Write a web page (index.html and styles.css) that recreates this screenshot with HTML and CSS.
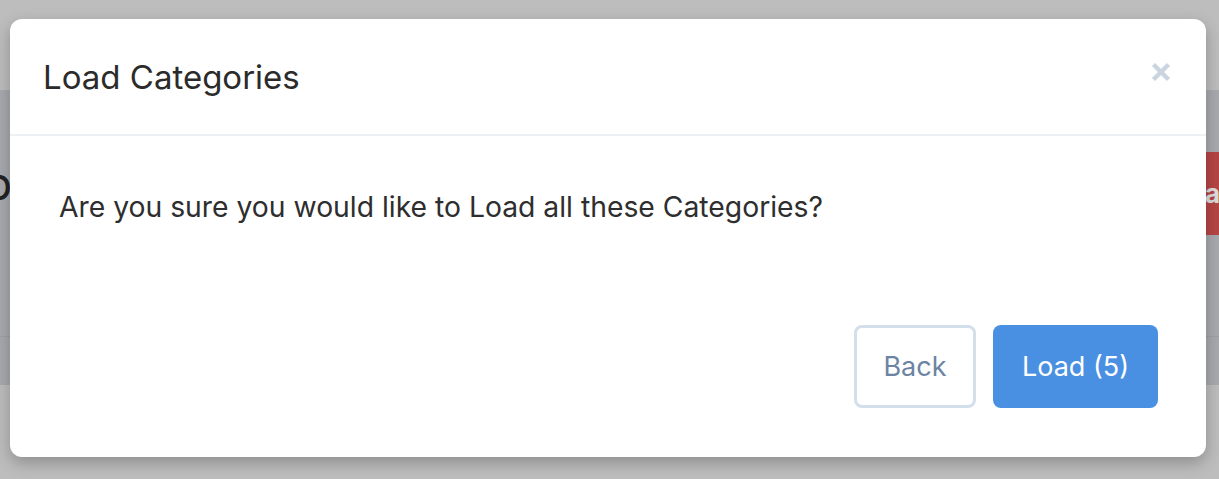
FILE: index.html
```html
<!DOCTYPE html>
<html>
<head>
<meta charset="utf-8">
<link rel="stylesheet" href="styles.css">
</head>
<body>
<div class="page">
  <div class="page-top"></div>
  <div class="page-main">
    <div class="page-heading">
      <span class="page-title">p</span>
      <span class="page-btn">a</span>
    </div>
    <div class="page-rule"></div>
  </div>
  <div class="page-bottom"></div>
</div>

<div class="modal">
  <div class="modal-header">
    <h2 class="modal-title">Load Categories</h2>
    <button class="modal-close" aria-label="Close">
      <svg width="20" height="20" viewBox="0 0 20 20"><path d="M2.5 2.5 L17.5 17.5 M17.5 2.5 L2.5 17.5" stroke="#cbd5df" stroke-width="4.5" stroke-linecap="butt"/></svg>
    </button>
  </div>
  <div class="modal-body">
    <p>Are you sure you would like to Load all these Categories?</p>
  </div>
  <div class="modal-footer">
    <button class="btn btn-back">Back</button>
    <button class="btn btn-load">Load (5)</button>
  </div>
</div>
</body>
</html>
```

FILE: styles.css
```css
* { box-sizing: border-box; }
html, body {
  margin: 0;
  padding: 0;
  width: 1219px;
  height: 479px;
  overflow: hidden;
  font-family: Inter, "Liberation Sans", sans-serif;
}
.page {
  display: flex;
  flex-direction: column;
  height: 479px;
  background: #bdbdbd;
}
.page-top {
  height: 90px;
  background: #bdbdbd;
}
.page-main {
  height: 295px;
  background: #a7a9ae;
  display: flex;
  flex-direction: column;
}
.page-heading {
  margin-top: 62px;
  height: 83px;
  display: flex;
  justify-content: space-between;
  align-items: center;
}
.page-title {
  font-size: 46px;
  line-height: 50px;
  color: #222;
  margin-left: -16px;
  margin-top: -22px;
}
.page-btn {
  width: 60px;
  height: 83px;
  background: #b54545;
  color: #ddd;
  font-weight: bold;
  font-size: 26px;
  display: flex;
  align-items: center;
  padding-left: 6px;
  margin-right: -40px;
}
.page-rule {
  margin-top: 101px;
  height: 1px;
  background: #9ea0a5;
}
.page-bottom { flex: 1; }

.modal {
  position: absolute;
  left: 10px;
  top: 19px;
  width: 1196px;
  height: 438px;
  background: #fff;
  border-radius: 12px;
  box-shadow: 0 6px 16px rgba(0,0,0,0.25);
  display: flex;
  flex-direction: column;
}
.modal-header {
  height: 117px;
  border-bottom: 2px solid #edf1f6;
  display: flex;
  align-items: flex-start;
  justify-content: space-between;
  padding: 38px 35px 0 33px;
}
.modal-title {
  margin: 0;
  font-size: 33px;
  line-height: 40px;
  font-weight: 400;
  color: #2b2b2b;
}
.modal-close {
  border: 0;
  background: none;
  padding: 0;
  margin-top: 5px;
  display: flex;
}
.modal-body {
  padding: 54px 49px 0;
}
.modal-body p {
  margin: 0;
  font-size: 28.3px;
  line-height: 34px;
  color: #2e2e2e;
}
.modal-footer {
  margin-top: auto;
  display: flex;
  justify-content: flex-end;
  gap: 17px;
  padding: 0 48px 49px;
}
.btn {
  height: 83px;
  border-radius: 8px;
  font-family: inherit;
  font-size: 27px;
  padding: 0 25px;
}
.btn-back {
  width: 122px;
  background: #fff;
  border: 3px solid #d3dfeb;
  color: #6c84a3;
}
.btn-load {
  width: 165px;
  background: #4a90e2;
  border: 0;
  color: #fff;
}
```
